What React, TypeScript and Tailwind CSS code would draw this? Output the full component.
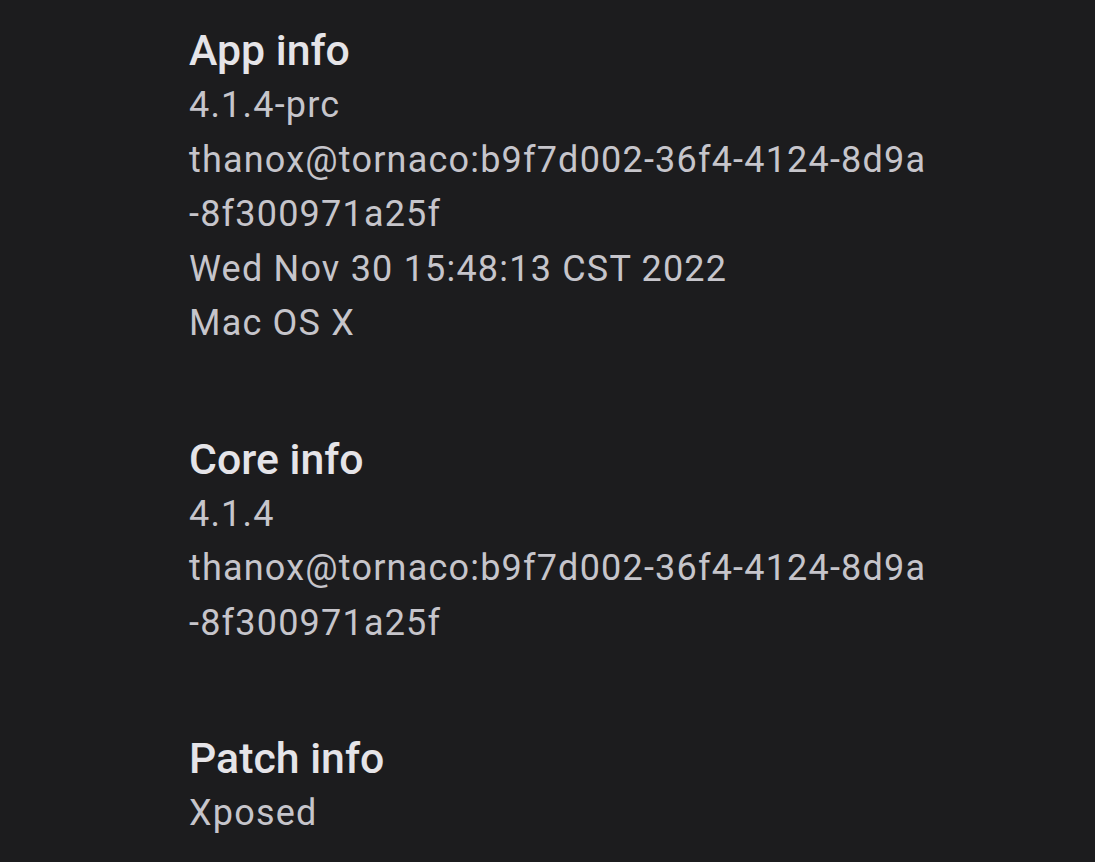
const sections = [
  {
    title: 'App info',
    lines: [
      ['4.1.4-prc'],
      ['thanox@tornaco:b9f7d002-36f4-4124-8d9a', '-8f300971a25f'],
      ['Wed Nov 30 15:48:13 CST 2022'],
      ['Mac OS X'],
    ],
  },
  {
    title: 'Core info',
    lines: [['4.1.4'], ['thanox@tornaco:b9f7d002-36f4-4124-8d9a', '-8f300971a25f']],
  },
  {
    title: 'Patch info',
    lines: [['Xposed']],
  },
];

export default function App() {
  return (
    <div
      className="min-h-screen bg-[#1c1c1e] pl-[189px] pt-[23px]"
      style={{ fontFamily: 'Roboto, "Noto Sans", sans-serif' }}
    >
      <div className="flex flex-col gap-[81px]">
        {sections.map((s) => (
          <section key={s.title}>
            <h2 className="text-[42.8px] font-medium leading-[55px] text-[#e5e4e8]">{s.title}</h2>
            {s.lines.map((parts, i) => (
              <p key={i} className="text-[36px] leading-[54.5px] tracking-[1.2px] text-[#c6c5cb]">
                {parts.map((p, j) => (
                  <span key={j} className="block">
                    {p}
                  </span>
                ))}
              </p>
            ))}
          </section>
        ))}
      </div>
    </div>
  );
}
